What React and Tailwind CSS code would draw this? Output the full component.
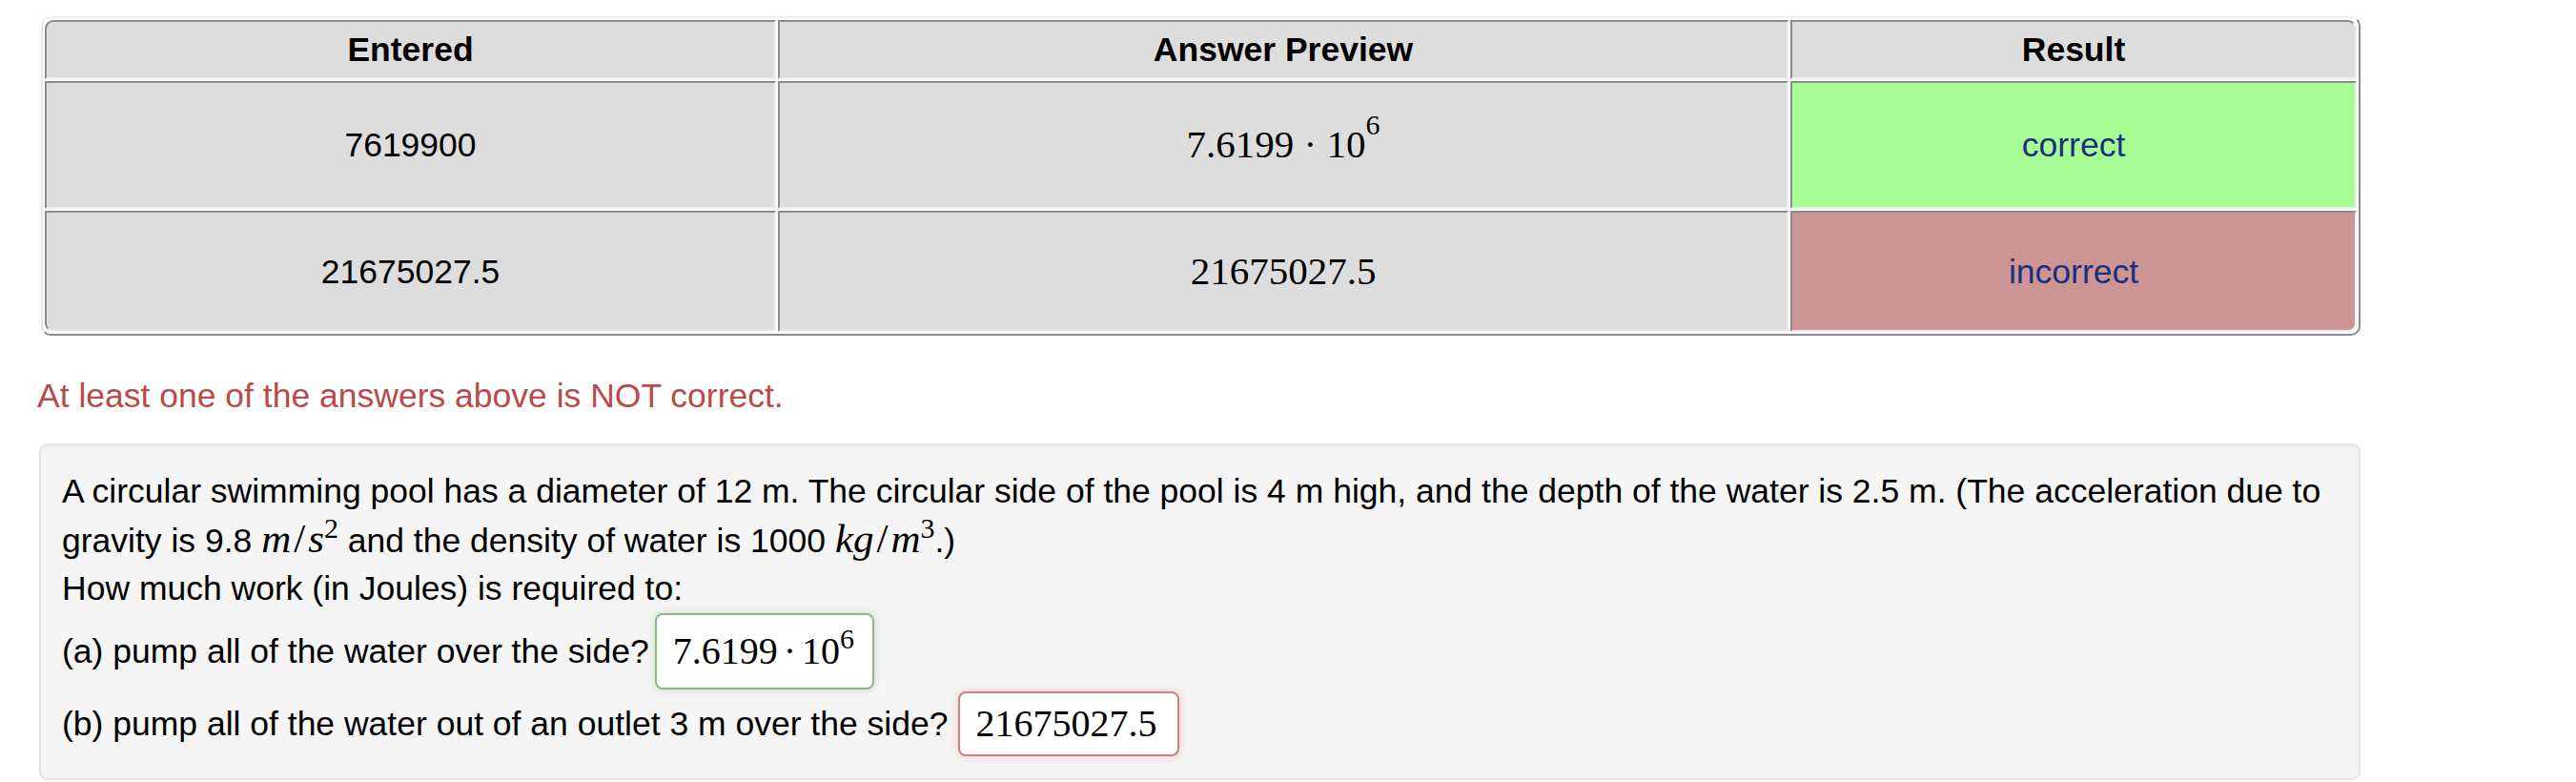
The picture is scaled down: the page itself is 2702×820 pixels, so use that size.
import React from "react";

const sans = "font-['Liberation_Sans',Arial,Helvetica,sans-serif]";
const serif = "font-['Liberation_Serif','Times_New_Roman',serif]";

const cellBase =
  "border-2 border-t-[#8c8c8c] border-l-[#8c8c8c] border-b-[#eeeeee] border-r-[#eeeeee] text-center align-middle p-0";

function M({ children }) {
  return <span className={`${serif} italic text-[43px]`}>{children}</span>;
}

export default function App() {
  return (
    <div className={`${sans} w-[2702px] h-[820px] bg-white text-black text-[35.5px] leading-[50px] overflow-hidden`}>
      <div className="pt-[17px] pl-[43px]">
        <table className="border-separate border-spacing-[2px] border-2 border-t-[#f0f0f0] border-l-[#e6e6e6] border-r-[#8a8a8a] border-b-[#8a8a8a] rounded-[10px] w-[2433px]">
          <thead>
            <tr>
              <th className={`${cellBase} bg-[#dddddd] h-[62px] w-[767px] rounded-tl-[9px] font-bold`}>Entered</th>
              <th className={`${cellBase} bg-[#dddddd] h-[62px] w-[1060px] font-bold`}>Answer Preview</th>
              <th className={`${cellBase} bg-[#dddddd] h-[62px] rounded-tr-[9px] font-bold`}>Result</th>
            </tr>
          </thead>
          <tbody>
            <tr>
              <td className={`${cellBase} bg-[#dddddd] h-[134px]`}>7619900</td>
              <td className={`${cellBase} bg-[#dddddd] h-[134px]`}>
                <span className={`${serif} text-[41px]`}>
                  7.6199 · 10<sup className="text-[30px] top-[-0.8em]">6</sup>
                </span>
              </td>
              <td className={`${cellBase} bg-[#a7fc94] h-[134px] text-[#18307f]`}>correct</td>
            </tr>
            <tr>
              <td className={`${cellBase} bg-[#dddddd] h-[127px] rounded-bl-[9px]`}>21675027.5</td>
              <td className={`${cellBase} bg-[#dddddd] h-[127px]`}>
                <span className={`${serif} text-[41px]`}>21675027.5</span>
              </td>
              <td className={`${cellBase} bg-[#cc9492] h-[127px] rounded-br-[9px] text-[#18307f]`}>incorrect</td>
            </tr>
          </tbody>
        </table>
      </div>

      <div className="pl-[39px] mt-[39px] leading-[48px] text-[#b94a48]">
        At least one of the answers above is NOT correct.
      </div>

      <div className="ml-[41px] mt-[26px] w-[2435px] bg-[#f5f5f5] border-2 border-[#e6e6e6] rounded-[8px] shadow-[inset_0_2px_2px_rgba(0,0,0,0.05)] pt-[23px] pl-[22px] pr-[22px] pb-[23px]">
        <div>
          A circular swimming pool has a diameter of 12 m. The circular side of the pool is 4 m high, and the depth of the water is 2.5 m. (The acceleration due to
        </div>
        <div>
          gravity is 9.8 <M>m</M>
          <span className={`${serif} text-[43px] mx-[3px]`}>/</span>
          <M>s</M>
          <sup className={`${serif} text-[30px]`}>2</sup> and the density of water is 1000 <M>kg</M>
          <span className={`${serif} text-[43px] mx-[3px]`}>/</span>
          <M>m</M>
          <sup className={`${serif} text-[30px]`}>3</sup>.)
        </div>
        <div>How much work (in Joules) is required to:</div>
        <div className="flex items-center mt-[1px]">
          <span>(a) pump all of the water over the side?</span>
          <span className="ml-[6px] inline-flex items-center h-[80px] w-[230px] bg-white border-2 border-[#8cb97e] rounded-[8px] shadow-[0_0_10px_rgba(120,170,100,0.35)] pl-[17px]">
            <span className={`${serif} text-[40px] leading-none`}>
              7.6199<span className="mx-[6px]">·</span>10<sup className="text-[30px] top-[-0.55em]">6</sup>
            </span>
          </span>
        </div>
        <div className="flex items-center mt-[2px]">
          <span>(b) pump all of the water out of an outlet 3 m over the side?</span>
          <span className="ml-[11px] inline-flex items-center h-[68px] w-[232px] bg-white border-2 border-[#d07e7e] rounded-[8px] shadow-[0_0_10px_rgba(200,110,110,0.35)] pl-[16px]">
            <span className={`${serif} text-[40px] leading-none`}>21675027.5</span>
          </span>
        </div>
      </div>
    </div>
  );
}
